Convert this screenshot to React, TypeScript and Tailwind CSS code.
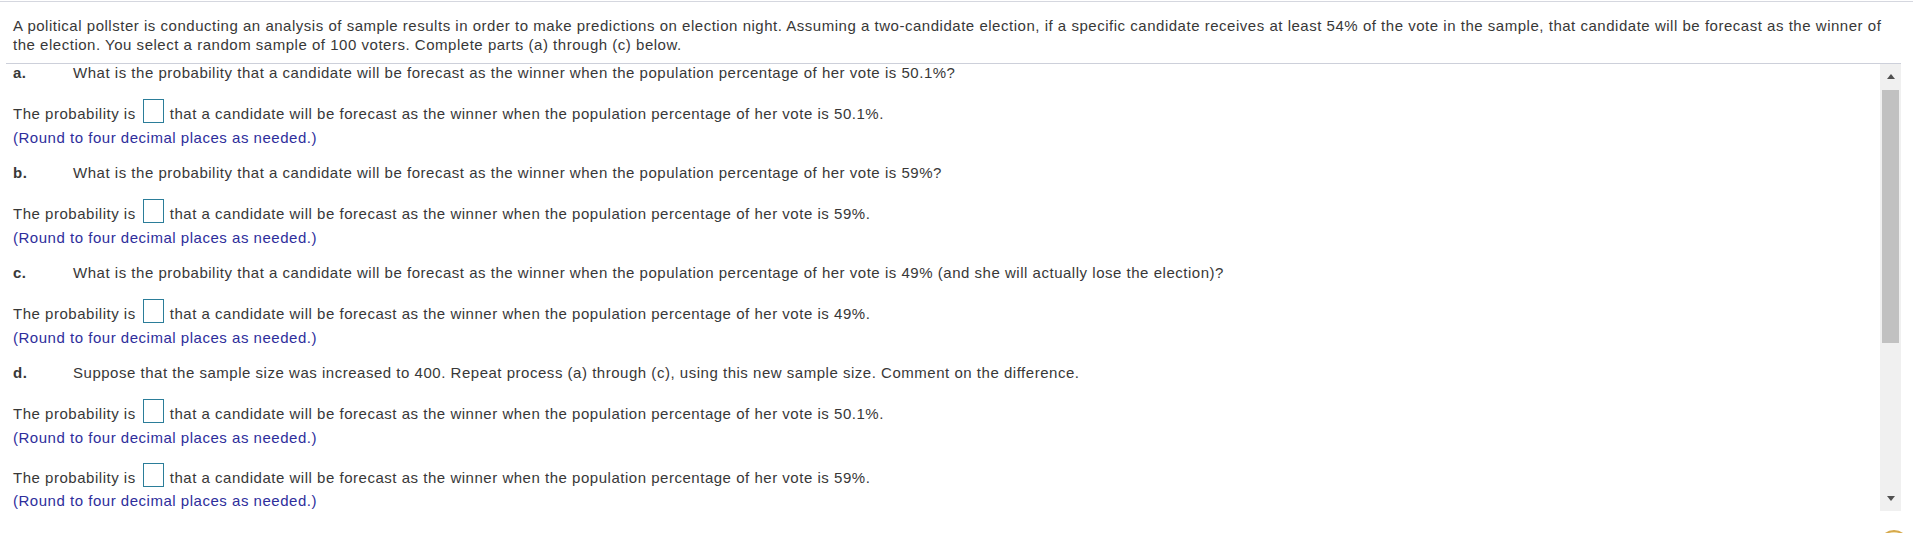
const parts = [
  {
    label: "a.",
    question:
      "What is the probability that a candidate will be forecast as the winner when the population percentage of her vote is 50.1%?",
    answers: ["50.1%"],
  },
  {
    label: "b.",
    question:
      "What is the probability that a candidate will be forecast as the winner when the population percentage of her vote is 59%?",
    answers: ["59%"],
  },
  {
    label: "c.",
    question:
      "What is the probability that a candidate will be forecast as the winner when the population percentage of her vote is 49% (and she will actually lose the election)?",
    answers: ["49%"],
  },
  {
    label: "d.",
    question:
      "Suppose that the sample size was increased to 400. Repeat process (a) through (c), using this new sample size. Comment on the difference.",
    answers: ["50.1%", "59%"],
  },
];

function Answer({ pct, tight }: { pct: string; tight?: boolean }) {
  return (
    <div className={tight ? "mt-[16px]" : "mt-[17px]"}>
      <div className="flex items-end h-[24px] leading-[19px]">
        <span className="whitespace-pre">The probability is</span>
        <span className="ml-[7px] mr-[6px] h-[24px] w-[21px] border border-[#2b7d99] bg-white" />
        <span className="whitespace-pre">
          that a candidate will be forecast as the winner when the population percentage of her vote is {pct}.
        </span>
      </div>
      <div className={`${tight ? "mt-[4px]" : "mt-[5px]"} leading-[19px] text-[#2e2e9c]`}>
        (Round to four decimal places as needed.)
      </div>
    </div>
  );
}

export default function App() {
  return (
    <div
      className="relative h-[533px] w-[1913px] overflow-hidden bg-white text-[15px] tracking-[0.52px] text-[#383838]"
      style={{ fontFamily: '"Liberation Sans", Arial, sans-serif' }}
    >
      <div className="mt-px border-t border-[#d5d7df]" />
      <div className="pl-[13px] pr-[20px] pt-[14px] leading-[19px]">
        A political pollster is conducting an analysis of sample results in order to make predictions on election
        night. Assuming a two-candidate election, if a specific candidate receives at least 54% of the vote in the
        sample, that candidate will be forecast as the winner of the election. You select a random sample of 100
        voters. Complete parts (a) through (c) below.
      </div>
      <div className="ml-[6px] mt-[9px] flex h-[448px] w-[1895px] border-t border-[#cdd0da]">
        <div className="flex-1 overflow-hidden pl-[7px]">
          {parts.map((p) => (
            <div key={p.label} className="mb-[17px]">
              <div className="flex leading-[18px]">
                <span className="w-[60px] font-bold">{p.label}</span>
                <span>{p.question}</span>
              </div>
              {p.answers.map((a, i) => (
                <Answer key={a} pct={a} tight={i > 0} />
              ))}
            </div>
          ))}
        </div>
        <div className="relative flex w-[21px] flex-col items-center bg-[#f0f0f0]">
          <div className="mt-[10px] h-0 w-0 border-x-[4px] border-b-[5px] border-x-transparent border-b-[#505050]" />
          <div className="mt-[11px] h-[253px] w-[17px] bg-[#c1c1c1]" />
          <div className="mt-auto mb-[10px] h-0 w-0 border-x-[4px] border-t-[5px] border-x-transparent border-t-[#505050]" />
        </div>
      </div>
      <div className="absolute left-[1879px] top-[530px] h-[30px] w-[30px] rounded-full border-2 border-[#d6a94c] bg-[#f6e6b8]" />
    </div>
  );
}
